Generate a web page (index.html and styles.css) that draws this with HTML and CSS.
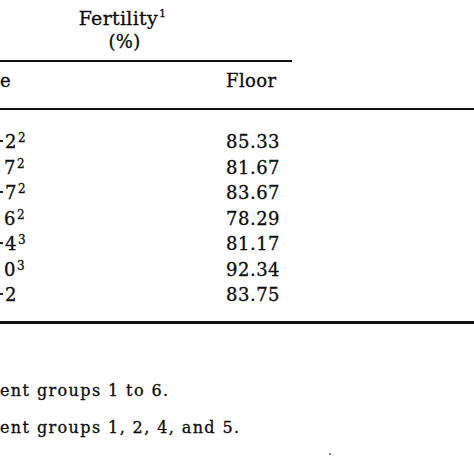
FILE: index.html
```html
<!DOCTYPE html>
<html lang="en">

<head>
    <meta charset="UTF-8">
    <meta name="viewport" content="width=device-width, initial-scale=1.0">
    <title>Fertility table</title>
    <link rel="stylesheet" href="styles.css">
</head>

<body>

    <div class="tabela">
        <div class="cabecalho">
            <div class="titulo">
                <div>Fertility<sup>1</sup></div>
                <div class="unidade">(%)</div>
            </div>
        </div>

        <div class="linha-sub">
            <span>e</span>
            <span>Floor</span>
        </div>

        <div class="corpo">
            <div class="linha"><span><i class="corte"></i>2<sup>2</sup></span><span>85.33</span></div>
            <div class="linha"><span class="recuo">7<sup>2</sup></span><span>81.67</span></div>
            <div class="linha"><span><i class="corte"></i>7<sup>2</sup></span><span>83.67</span></div>
            <div class="linha"><span class="recuo">6<sup>2</sup></span><span>78.29</span></div>
            <div class="linha"><span><i class="corte"></i>4<sup>3</sup></span><span>81.17</span></div>
            <div class="linha"><span class="recuo">0<sup>3</sup></span><span>92.34</span></div>
            <div class="linha"><span><i class="corte"></i>2</span><span>83.75</span></div>
        </div>
    </div>

    <div class="notas">
        <p>ent groups 1 to 6.</p>
        <p>ent groups 1, 2, 4, and 5.</p>
        <div class="sujeira"><i></i></div>
    </div>

</body>

</html>
```

FILE: styles.css
```css
body {
    margin: 0;
    background-color: #fff;
    color: #0c0c0c;
    font-family: "DejaVu Serif", "Liberation Serif", serif;
    -webkit-text-stroke: 0.3px #0c0c0c;
}

.cabecalho {
    width: 292px;
    padding: 6px 0 6px 0;
    border-bottom: 2px solid #111;
}

.titulo {
    width: 245px;
    text-align: center;
    font-size: 19px;
    line-height: 24px;
    letter-spacing: 0.3px;
}

.titulo sup {
    font-size: 11px;
    line-height: 0;
    vertical-align: 8px;
    margin-left: 1px;
}

.unidade {
    font-size: 18px;
    padding-left: 4px;
}

.linha-sub {
    display: grid;
    grid-template-columns: 226px 1fr;
    padding: 7px 0 15px 0;
    border-bottom: 2px solid #111;
    font-size: 18px;
    line-height: 24px;
    letter-spacing: 0.4px;
}

.corpo {
    padding: 19px 0 13.5px 0;
    border-bottom: 3px solid #111;
}

.linha {
    display: grid;
    grid-template-columns: 226px 1fr;
    font-size: 18px;
    line-height: 25.5px;
    letter-spacing: 0.5px;
}

.linha sup {
    font-size: 12px;
    line-height: 0;
    vertical-align: 6px;
    margin-left: 1px;
}

.corte {
    display: inline-block;
    width: 3px;
    height: 2px;
    margin-right: 2px;
    vertical-align: 6px;
    background-color: #222;
}

.recuo {
    padding-left: 4px;
}

.notas {
    margin-top: 49px;
    font-size: 16px;
    line-height: 36.5px;
    letter-spacing: 1.4px;
}

.notas p {
    margin: 0;
}

.sujeira {
    padding-left: 329px;
    line-height: 8px;
}

.sujeira i {
    display: inline-block;
    width: 2px;
    height: 2px;
    background-color: #888;
    -webkit-text-stroke: 0;
}
```
